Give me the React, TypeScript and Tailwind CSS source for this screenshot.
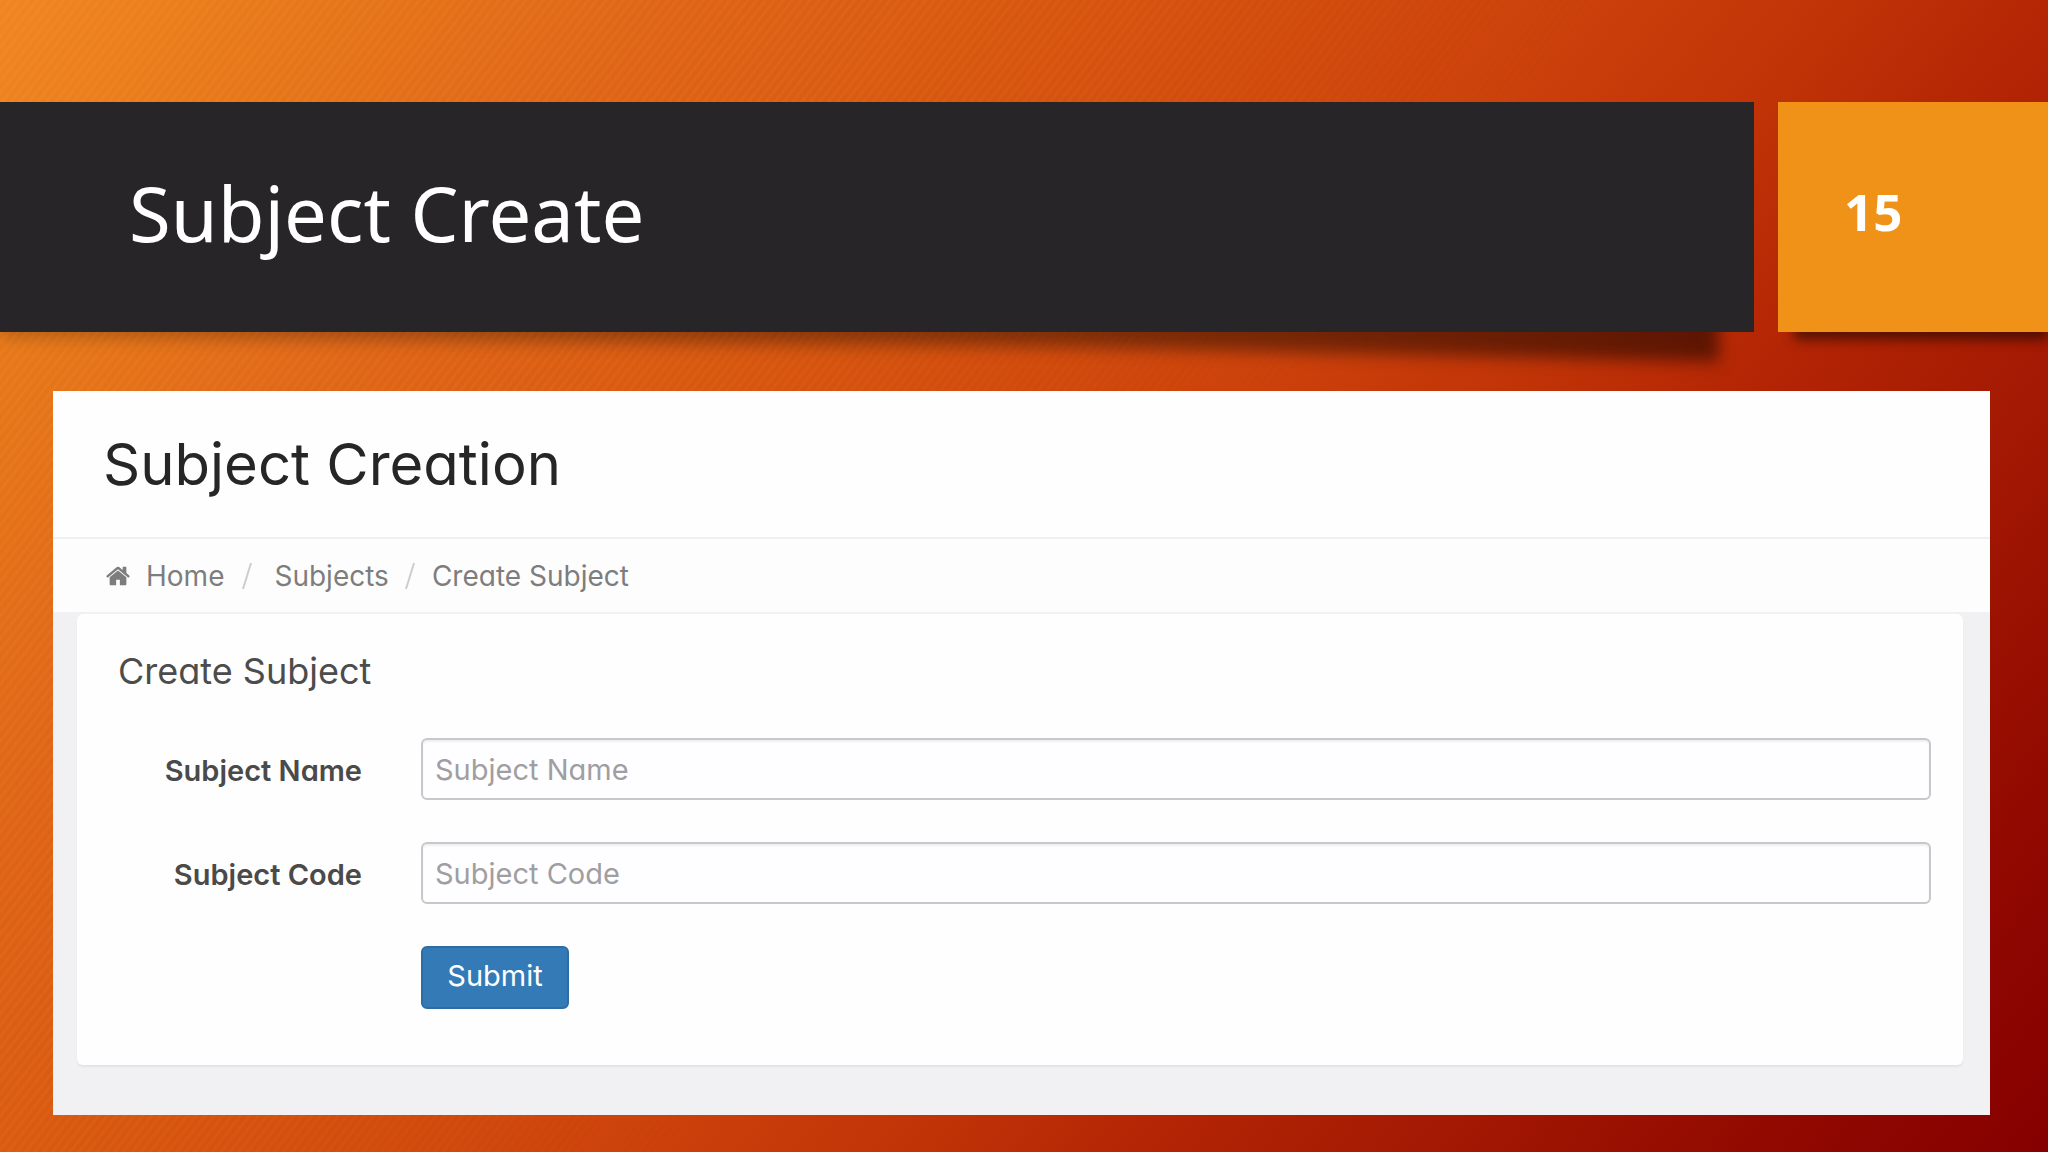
type FieldProps = { id: string; label: string };

function HomeIcon() {
  return (
    <svg viewBox="0 0 1792 1792" className="h-[26px] w-[26px] shrink-0" fill="currentColor" aria-hidden="true">
      <path d="M1472 992v480q0 26-19 45t-45 19h-384v-384h-256v384h-384q-26 0-45-19t-19-45v-480q0-1 .5-3t.5-3l575-474 575 474q1 2 1 6zm223-69l-62 74q-8 9-21 11h-3q-13 0-21-7l-692-577-692 577q-12 8-24 7-13-2-21-11l-62-74q-8-10-7-23.5t11-21.5l719-599q32-26 76-26t76 26l244 204v-195q0-14 9-23t23-9h192q14 0 23 9t9 23v408l219 182q10 8 11 21.5t-7 23.5z" />
    </svg>
  );
}

function Slash() {
  return (
    <svg viewBox="0 0 10 28" className="h-7 w-[10px] shrink-0 text-[#cdcdcd]" fill="none" stroke="currentColor" strokeWidth="2" aria-hidden="true">
      <path d="M9 1 1 27" />
    </svg>
  );
}

function Field({ id, label }: FieldProps) {
  return (
    <div className="flex items-center gap-[59px]">
      <label htmlFor={id} className="w-[244px] shrink-0 pt-1 text-right text-[29px] leading-8 font-semibold text-[#4a4a4a]">
        {label}
      </label>
      <input
        id={id}
        type="text"
        placeholder={label}
        className="h-[62px] min-w-0 flex-1 rounded-md border-2 border-[#c9c7ca] bg-[#fefdff] px-3 text-[29px] text-[#555] shadow-[inset_0_2px_2px_rgba(0,0,0,0.06)] outline-none placeholder:text-[#a09ea0]"
      />
    </div>
  );
}

export default function App() {
  return (
    <div className="relative isolate min-h-screen overflow-hidden bg-[linear-gradient(129deg,#f08622_0%,#e67518_12%,#e16818_20%,#d8570f_34%,#cc420b_52%,#c03307_62%,#b22404_70%,#a31903_79%,#920900_90%,#850000_100%)] pt-[102px] pb-9">
      <div className="absolute inset-0 -z-20 bg-[repeating-linear-gradient(128deg,rgba(255,225,150,0.05)_0px,rgba(255,225,150,0.05)_2px,transparent_4px,transparent_7px)] [mask-image:linear-gradient(129deg,#000_0%,#000_30%,transparent_60%)]" />

      <header className="flex h-[230px] gap-6">
        <div className="relative min-w-0 flex-1">
          <div className="absolute inset-x-0 top-8 -bottom-11 -z-10 blur-[8px]">
            <div className="h-full bg-linear-to-r from-black/20 via-black/35 to-black/50 [clip-path:polygon(-20px_0,98%_0,98%_94%,60%_88%,-20px_84%)]" />
          </div>
          <div className="flex h-full items-center bg-[#272528] pb-2 pl-[129px]">
            <h1 className="font-['Noto_Sans',sans-serif] text-[76px] leading-none text-white">Subject Create</h1>
          </div>
        </div>
        <div className="relative w-[270px] shrink-0">
          <div className="absolute top-4 right-0 -bottom-2 left-4 -z-10 bg-black/50 blur-[6px]" />
          <div className="flex h-full items-center bg-[#f09218] pb-3 pl-[66px]">
            <span className="font-['Noto_Sans',sans-serif] text-[51px] leading-none font-bold text-white">15</span>
          </div>
        </div>
      </header>

      <main className="mt-[59px] mr-[58px] ml-[53px] bg-[#f1f0f3] pb-[50px] font-['Inter',sans-serif] [font-feature-settings:'cv11']">
        <div className="flex h-[148px] items-center border-b-2 border-[#f0eff1] bg-[#fefefe] px-[50px]">
          <h2 className="text-[58px] leading-none text-[#262626]">Subject Creation</h2>
        </div>
        <nav aria-label="Breadcrumb" className="flex h-[75px] items-center border-b-2 border-[#f1f0f3] bg-[#fefdfe] px-[52px] text-[28px] leading-8 text-[#7d7d7d]">
          <a href="#home" className="flex items-center gap-[15px]">
            <HomeIcon />
            Home
          </a>
          <span className="flex w-[50px] justify-center pr-1"><Slash /></span>
          <a href="#subjects">Subjects</a>
          <span className="flex w-[43px] justify-center"><Slash /></span>
          <span>Create Subject</span>
        </nav>

        <section className="mr-[27px] ml-6 rounded-md bg-[#fefefe] pt-9 pr-8 pb-14 pl-[41px] shadow-[0_2px_2px_rgba(0,0,0,0.06)]">
          <h3 className="text-[36px] leading-[42px] text-[#4c4c4c]">Create Subject</h3>
          <form className="mt-[46px] flex flex-col gap-[42px]" onSubmit={(e) => e.preventDefault()}>
            <Field id="subject-name" label="Subject Name" />
            <Field id="subject-code" label="Subject Code" />
            <button type="submit" className="ml-[303px] h-[63px] w-[148px] rounded-md border-2 border-[#2e6da4] bg-[#337ab7] pb-1 text-[29px] leading-none text-white">
              Submit
            </button>
          </form>
        </section>
      </main>
    </div>
  );
}
